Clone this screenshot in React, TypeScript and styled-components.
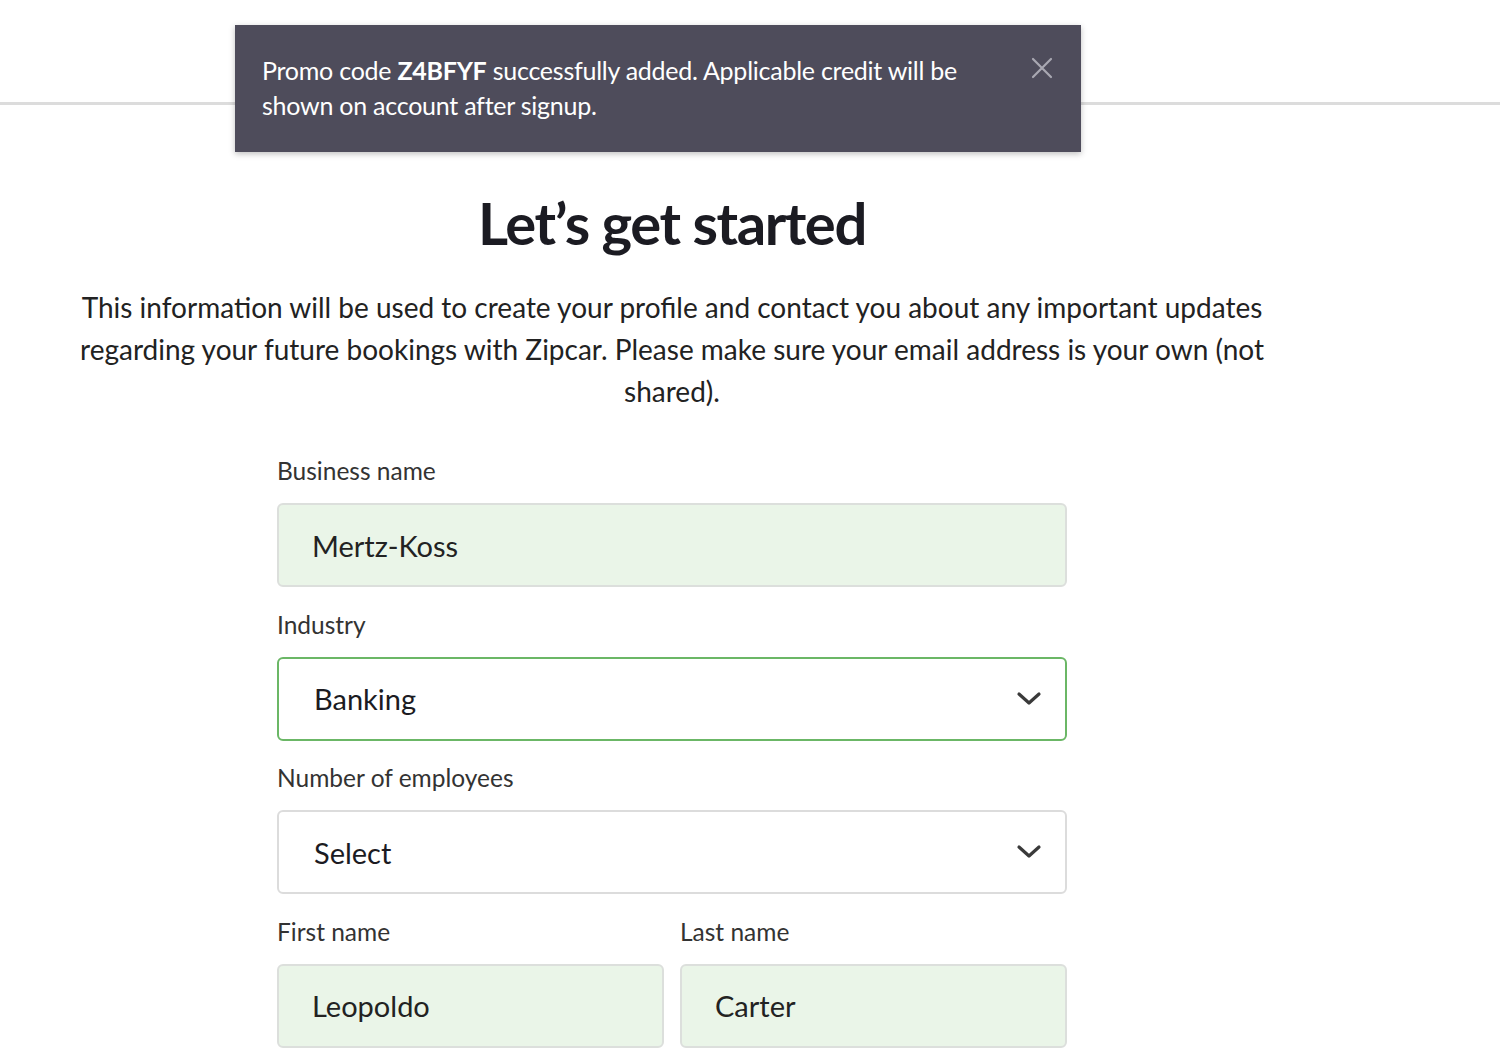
import * as React from "react";
import styled, { createGlobalStyle } from "styled-components";

const GlobalStyle = createGlobalStyle`
  html, body {
    margin: 0;
    padding: 0;
    background: #ffffff;
    font-family: Lato, "Open Sans", sans-serif;
    color: #222;
  }
`;

const Page = styled.div`
  position: relative;
  width: 1500px;
  min-height: 1061px;
  overflow: hidden;
`;

const Header = styled.div`
  height: 102px;
  border-bottom: 3px solid #dcdcdc;
`;

const Toast = styled.div`
  position: absolute;
  left: 235px;
  top: 25px;
  width: 846px;
  height: 127px;
  box-sizing: border-box;
  padding: 28px 112px 0 27px;
  background: #4e4c5b;
  color: #ffffff;
  font-size: 25px;
  line-height: 35px;
  letter-spacing: -0.25px;
  box-shadow: 0 2px 6px rgba(0, 0, 0, 0.25);
  b {
    font-weight: 700;
  }
`;

const CloseButton = styled.button`
  position: absolute;
  right: 28px;
  top: 32px;
  width: 22px;
  height: 22px;
  padding: 0;
  border: none;
  background: transparent;
  cursor: pointer;
  display: flex;
  align-items: center;
  justify-content: center;
`;

const Main = styled.div`
  display: flex;
  flex-direction: column;
  align-items: center;
  width: 1344px;
`;

const Title = styled.h1`
  margin: 83px 0 0;
  font-size: 58px;
  line-height: 70px;
  font-weight: 700;
  letter-spacing: -1.4px;
  color: #1b1b22;
`;

const Intro = styled.p`
  margin: 28px 0 0;
  width: 1196px;
  text-align: center;
  font-size: 28px;
  line-height: 42px;
  color: #222;
`;

const Form = styled.form`
  margin-top: 45px;
  width: 790px;
  display: flex;
  flex-direction: column;
`;

const Row = styled.div`
  display: grid;
  grid-template-columns: 1fr 1fr;
  column-gap: 16px;
`;

const Field = styled.div`
  display: flex;
  flex-direction: column;
  margin-bottom: 23.5px;
`;

const Label = styled.label`
  font-size: 24.5px;
  line-height: 28px;
  color: #333;
  margin-bottom: 18px;
`;

const TextInput = styled.div`
  height: 84px;
  box-sizing: border-box;
  display: flex;
  align-items: center;
  padding: 0 33px;
  background: #eaf5e8;
  border: 2px solid #dcdfdc;
  border-radius: 6px;
  font-size: 29px;
  color: #222;
`;

const SelectBox = styled.div<{ active?: boolean }>`
  height: 84px;
  box-sizing: border-box;
  display: flex;
  align-items: center;
  justify-content: space-between;
  padding: 0 23px 0 35px;
  background: #ffffff;
  border: 2px solid ${(p) => (p.active ? "#6bb766" : "#dcdcdc")};
  border-radius: 6px;
  font-size: 29px;
  color: #1b1b22;
`;

const Chevron = () => (
  <svg width="26" height="16" viewBox="0 0 26 16">
    <path
      d="M3 3 L13 12 L23 3"
      fill="none"
      stroke="#3a3a3a"
      strokeWidth="3.2"
      strokeLinecap="round"
      strokeLinejoin="round"
    />
  </svg>
);

export default function App() {
  return (
    <Page>
      <GlobalStyle />
      <Header />
      <Toast>
        Promo code <b>Z4BFYF</b> successfully added. Applicable credit will be
        shown on account after signup.
        <CloseButton aria-label="Close">
          <svg width="22" height="22" viewBox="0 0 22 22">
            <path
              d="M2 2 L20 20 M20 2 L2 20"
              stroke="#a9a8b2"
              strokeWidth="2.2"
              strokeLinecap="round"
            />
          </svg>
        </CloseButton>
      </Toast>
      <Main>
        <Title>Let’s get started</Title>
        <Intro>
          This information will be used to create your profile and contact you
          about any important updates regarding your future bookings with
          Zipcar. Please make sure your email address is your own (not shared).
        </Intro>
        <Form>
          <Field>
            <Label>Business name</Label>
            <TextInput>Mertz-Koss</TextInput>
          </Field>
          <Field>
            <Label>Industry</Label>
            <SelectBox active>
              Banking
              <Chevron />
            </SelectBox>
          </Field>
          <Field>
            <Label>Number of employees</Label>
            <SelectBox>
              Select
              <Chevron />
            </SelectBox>
          </Field>
          <Row>
            <Field>
              <Label>First name</Label>
              <TextInput>Leopoldo</TextInput>
            </Field>
            <Field>
              <Label>Last name</Label>
              <TextInput>Carter</TextInput>
            </Field>
          </Row>
        </Form>
      </Main>
    </Page>
  );
}
